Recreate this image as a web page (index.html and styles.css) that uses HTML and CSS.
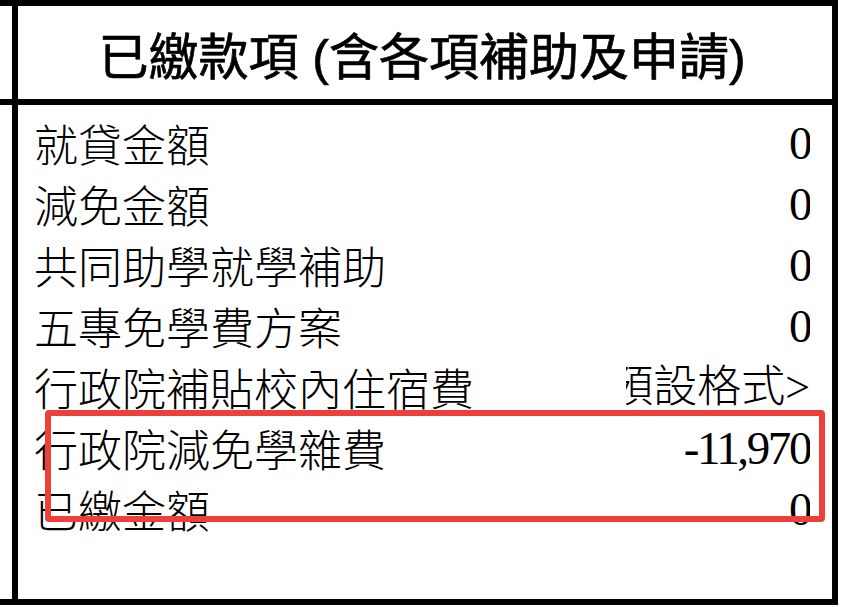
FILE: index.html
```html
<!DOCTYPE html>
<html lang="zh-Hant">
<head>
<meta charset="utf-8">
<title>已繳款項</title>
<link rel="stylesheet" href="styles.css">
</head>
<body>
<div class="sheet">
  <div class="stub stub-head"></div>
  <div class="cell head">已繳款項 (含各項補助及申請)</div>
  <div class="stub"></div>
  <div class="cell body">
    <div class="row"><span class="label">就貸金額</span><span class="val"><span class="num">0</span></span></div>
    <div class="row"><span class="label">減免金額</span><span class="val"><span class="num">0</span></span></div>
    <div class="row"><span class="label">共同助學就學補助</span><span class="val"><span class="num">0</span></span></div>
    <div class="row"><span class="label">五專免學費方案</span><span class="val"><span class="num">0</span></span></div>
    <div class="row"><span class="label">行政院補貼校內住宿費</span><span class="val"><span class="txt">&lt;預設格式&gt;</span></span></div>
    <div class="row"><span class="label">行政院減免學雜費</span><span class="val"><span class="num">-11,970</span></span></div>
    <div class="row"><span class="label">已繳金額</span><span class="val"><span class="num">0</span></span></div>
  </div>
  <div class="mark"></div>
</div>
</body>
</html>
```
FILE: styles.css
```css
html, body {
  margin: 0;
  padding: 0;
  background: #fff;
}

.sheet {
  position: relative;
  width: 838px;
  display: grid;
  grid-template-columns: 12px 826px;
  grid-template-rows: 99px 494px;
  border-top: 6px solid #000;
  border-bottom: 6px solid #000;
  color: #000;
}

.stub-head,
.head {
  border-bottom: 6px solid #000;
}

.cell {
  box-sizing: border-box;
  border-left: 6px solid #000;
  border-right: 6px solid #000;
}

.head {
  display: flex;
  align-items: center;
  justify-content: center;
  padding-right: 6px;
  font-family: "Liberation Sans", "Noto Sans CJK TC", sans-serif;
  font-size: 50px;
  font-weight: 400;
  -webkit-text-stroke: 0.7px #000;
  white-space: nowrap;
}

.body {
  padding: 8px 22px 0 16px;
}

.row {
  display: flex;
  height: 61px;
  line-height: 61px;
  font-family: "Noto Sans CJK TC", sans-serif;
  font-weight: 300;
  font-size: 44px;
  white-space: nowrap;
}

.label {
  flex: 1;
  min-width: 0;
}

.val {
  flex: none;
  width: 184px;
  display: flex;
  justify-content: flex-end;
  overflow: hidden;
}

.num {
  font-family: "Liberation Serif", serif;
  font-size: 47px;
  font-weight: 400;
  letter-spacing: -2.4px;
}

.txt {
  flex: none;
  font-family: "Liberation Serif", "Noto Sans CJK TC", serif;
}

.mark {
  position: absolute;
  left: 45px;
  top: 404px;
  width: 780px;
  height: 112px;
  box-sizing: border-box;
  border: 6px solid #ee3f3b;
  border-radius: 4px;
}
```
